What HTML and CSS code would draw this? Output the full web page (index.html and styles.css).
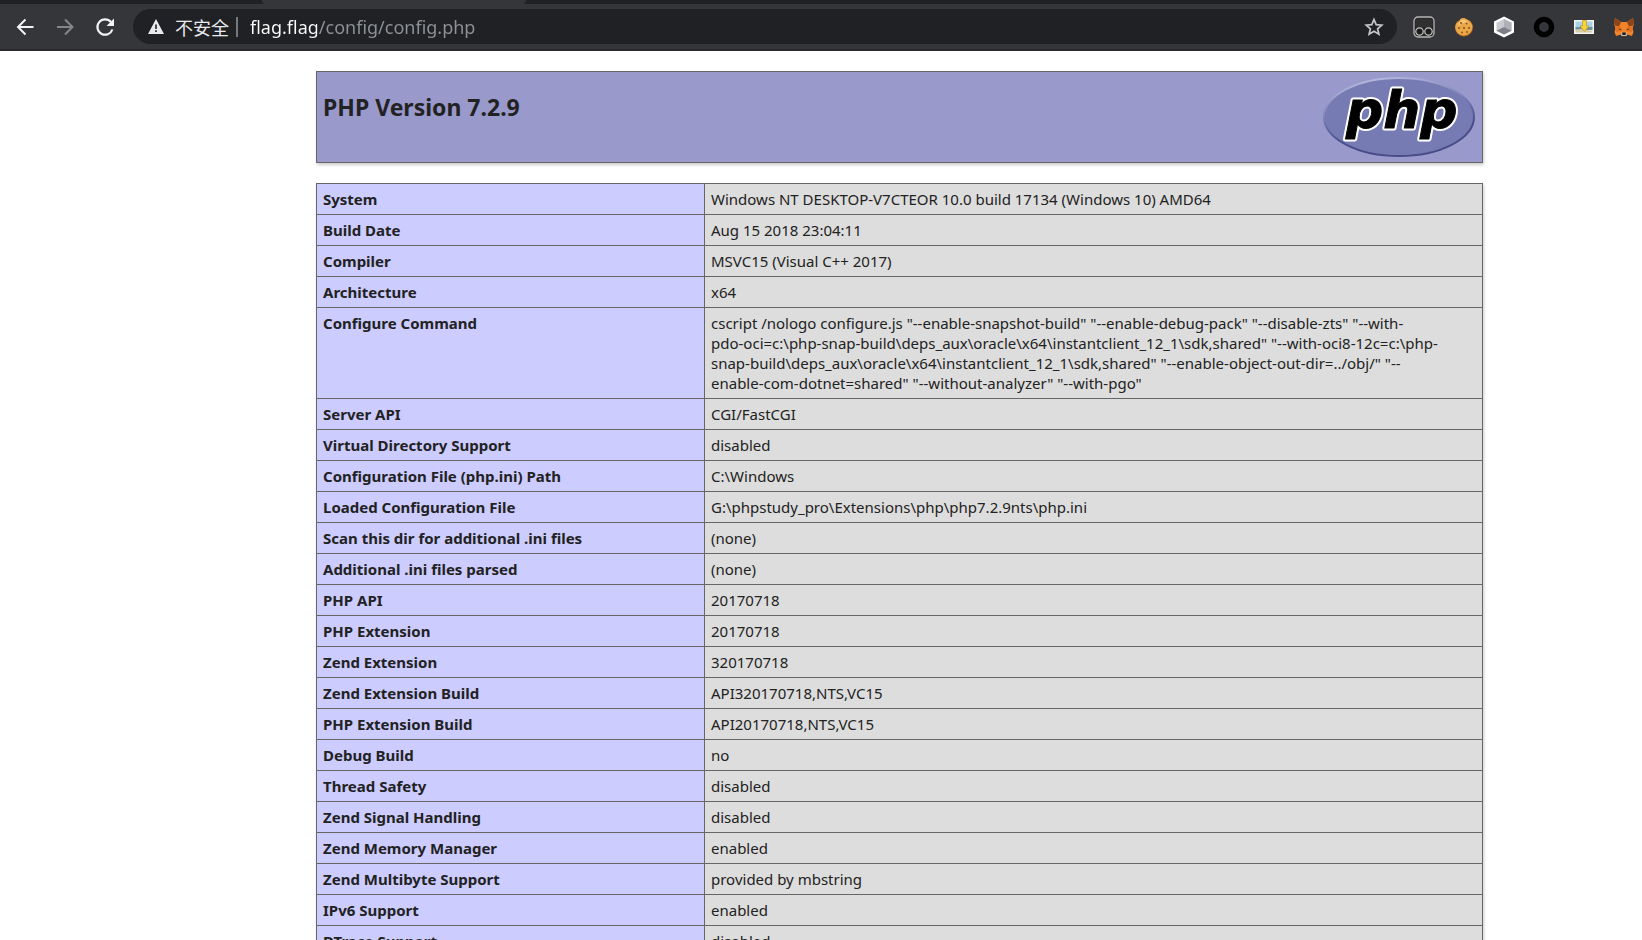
FILE: index.html
```html
<!doctype html>
<html lang="zh-CN">
<head>
  <meta charset="utf-8">
  <meta name="viewport" content="width=device-width, initial-scale=1">
  <title>PHP 7.2.9 - phpinfo()</title>
  <link rel="stylesheet" href="styles.css">
</head>
<body>
  <div class="tabs"><div class="tab"></div></div>
  <header class="toolbar">
    <nav class="nav">
      <button type="button" aria-label="Back">
        <svg width="20" height="20" viewBox="0 0 20 20" fill="none" stroke="#f1f3f4" stroke-width="2"><path d="M18.500 10H3M10.500 2.500L3 10L10.500 17.500"/></svg>
      </button>
      <button type="button" aria-label="Forward" disabled>
        <svg width="20" height="20" viewBox="0 0 20 20" fill="none" stroke="#85868a" stroke-width="2"><path d="M2 10H17M10 2.500L17.500 10L10 17.500"/></svg>
      </button>
      <button type="button" aria-label="Reload">
        <svg width="20" height="20" viewBox="0 0 20 20"><path d="M16 5A7.700 7.700 0 1 0 17.400 12.500" fill="none" stroke="#f1f3f4" stroke-width="2.200"/><path d="M19 1.500V9H11.500Z" fill="#f1f3f4"/></svg>
      </button>
    </nav>
    <form class="omnibox">
      <svg width="16" height="15" viewBox="0 0 16 15"><path d="M8 0L16 15H0Z" fill="#e8eaed"/><path d="M7.200 5.500H8.800V10H7.200ZM7.200 11.300H8.800V13H7.200Z" fill="#202124"/></svg>
      <label class="unsafe" for="url">不安全</label>
      <span class="divider"></span>
      <input class="url" id="url" type="text" value="flag.flag/config/config.php" spellcheck="false">
      <button class="star" type="button" aria-label="Bookmark">
        <svg width="20" height="20" viewBox="0 0 20 20" fill="none" stroke="#c3c5c8" stroke-width="1.700"><path d="M10 2.500L12.200 7.600L17.800 8.100L13.600 11.800L14.900 17.200L10 14.300L5.100 17.200L6.400 11.800L2.200 8.100L7.800 7.600Z"/></svg>
      </button>
    </form>
    <div class="extensions">
      <button type="button" aria-label="Tampermonkey">
        <svg width="22" height="22" viewBox="0 0 22 22"><rect x="1" y="1" width="20" height="20" rx="4" fill="#242424" stroke="#b5b5b5" stroke-width="1.300"/><rect x="2.500" y="2.500" width="17" height="9" rx="2" fill="#303030"/><g fill="#1c1c1c" stroke="#c8c8c8" stroke-width="1.200"><circle cx="6.500" cy="15.500" r="3.700"/><circle cx="15.500" cy="15.500" r="3.700"/></g></svg>
      </button>
      <button type="button" aria-label="Cookies">
        <svg width="20" height="20" viewBox="0 0 20 20"><circle cx="10" cy="10.500" r="9" fill="#b96a1c"/><path d="M6 2.200Q8 .6 11 1.200L13 2.800L16 4.500L18.300 8Q19 14 14 17.300Q8 20 3.500 16Q-.5 11 2.500 6L6 4Z" fill="#eba84a"/><path d="M5 5Q10 0 14.500 6Q9 4 4 9Z" fill="#f6c878"/><g fill="#8a4f1e"><circle cx="7" cy="6" r="1"/><circle cx="12.500" cy="6.500" r=".9"/><circle cx="5" cy="11" r="1"/><circle cx="10" cy="11" r="1.100"/><circle cx="15" cy="11" r="1"/><circle cx="8" cy="15.500" r=".9"/><circle cx="13" cy="15" r=".9"/></g></svg>
      </button>
      <button type="button" aria-label="Cube">
        <svg width="22" height="22" viewBox="0 0 22 22"><path d="M11 .5L21 5.500V16.500L11 21.500L1 16.500V5.500Z" fill="#fff"/><path d="M11 3L18.500 6.800V14.800L11 18.500L3.500 14.800V6.800Z" fill="#c9cbce"/><path d="M11 3L18.500 6.800V14.800L11 11Z" fill="#aeb1b5"/><path d="M11 11L18.500 14.800L11 18.500L3.500 14.800Z" fill="#7d8187"/></svg>
      </button>
      <button type="button" aria-label="Ring">
        <svg width="22" height="22" viewBox="0 0 22 22"><circle cx="11" cy="11" r="7.600" fill="none" stroke="#000" stroke-width="5.400"/></svg>
      </button>
      <button type="button" aria-label="Image downloader">
        <svg width="20" height="16" viewBox="0 0 20 16"><path d="M0 1H20V15H0Z" fill="#f4f4ef"/><path d="M1.500 2.500H18.500V9H1.500Z" fill="#a9cfe9"/><path d="M1.500 8H18.500V11H1.500Z" fill="#6c91a0"/><path d="M1.500 10.500L8 10L18.500 12V13.500H1.500Z" fill="#d8cba7"/><path d="M8.500 1.500H12.500V7H15L10.500 12.500L6 7H8.500Z" fill="#f9d438" stroke="#c19b20" stroke-width=".7"/></svg>
      </button>
      <button type="button" aria-label="MetaMask">
        <svg width="20" height="20" viewBox="0 0 20 20"><path d="M1 1L7 5H13L19 1L20 7L18.500 11L19.500 15L18 19L13 17.500L12 19H8L7 17.500L2 19L.5 15L1.500 11L0 7Z" fill="#f0842a"/><path d="M1 1L7 5L5 9.500L1 8.500L0 6ZM19 1L13 5L15 9.500L19 8.500L20 6Z" fill="#8a4518"/><path d="M1 10L6 9L8 14L2 15ZM19 10L14 9L12 14L18 15Z" fill="#e56f1c"/><path d="M5 11.500L8 12.800L5.500 13ZM15 11.500L12 12.800L14.500 13Z" fill="#26333c"/><path d="M7 15.500H13L12.500 19H7.500Z" fill="#d5bfb2"/><path d="M8 15.500H12L11.500 18H8.500Z" fill="#161616"/></svg>
      </button>
    </div>
  </header>
  <main class="page">
    <div class="box head">
      <h1>PHP Version 7.2.9</h1>
      <svg class="logo" width="152" height="80" viewBox="0 0 152 80">
        <defs>
          <linearGradient id="rim" x1=".35" y1="0" x2=".65" y2="1">
            <stop offset="0" stop-color="#b4b8dd"/>
            <stop offset=".4" stop-color="#777bb3"/>
            <stop offset=".7" stop-color="#484c89"/>
            <stop offset="1" stop-color="#484c89"/>
          </linearGradient>
        </defs>
        <ellipse cx="76" cy="40" rx="75" ry="39" fill="#777bb3" stroke="url(#rim)" stroke-width="2"/>
        <text class="logo-text logo-outline" x="23" y="51" aria-hidden="true">php</text>
        <text class="logo-text" x="23" y="51">php</text>
      </svg>
    </div>
    <table class="box info">
      <tbody>
        <tr><th scope="row">System</th><td>Windows NT DESKTOP-V7CTEOR 10.0 build 17134 (Windows 10) AMD64</td></tr>
        <tr><th scope="row">Build Date</th><td>Aug 15 2018 23:04:11</td></tr>
        <tr><th scope="row">Compiler</th><td>MSVC15 (Visual C++ 2017)</td></tr>
        <tr><th scope="row">Architecture</th><td>x64</td></tr>
        <tr><th scope="row">Configure Command</th><td>cscript /nologo configure.js "--enable-snapshot-build" "--enable-debug-pack" "--disable-zts" "--with-<br>pdo-oci=c:\php-snap-build\deps_aux\oracle\x64\instantclient_12_1\sdk,shared" "--with-oci8-12c=c:\php-<br>snap-build\deps_aux\oracle\x64\instantclient_12_1\sdk,shared" "--enable-object-out-dir=../obj/" "--<br>enable-com-dotnet=shared" "--without-analyzer" "--with-pgo"</td></tr>
        <tr><th scope="row">Server API</th><td>CGI/FastCGI</td></tr>
        <tr><th scope="row">Virtual Directory Support</th><td>disabled</td></tr>
        <tr><th scope="row">Configuration File (php.ini) Path</th><td>C:\Windows</td></tr>
        <tr><th scope="row">Loaded Configuration File</th><td>G:\phpstudy_pro\Extensions\php\php7.2.9nts\php.ini</td></tr>
        <tr><th scope="row">Scan this dir for additional .ini files</th><td>(none)</td></tr>
        <tr><th scope="row">Additional .ini files parsed</th><td>(none)</td></tr>
        <tr><th scope="row">PHP API</th><td>20170718</td></tr>
        <tr><th scope="row">PHP Extension</th><td>20170718</td></tr>
        <tr><th scope="row">Zend Extension</th><td>320170718</td></tr>
        <tr><th scope="row">Zend Extension Build</th><td>API320170718,NTS,VC15</td></tr>
        <tr><th scope="row">PHP Extension Build</th><td>API20170718,NTS,VC15</td></tr>
        <tr><th scope="row">Debug Build</th><td>no</td></tr>
        <tr><th scope="row">Thread Safety</th><td>disabled</td></tr>
        <tr><th scope="row">Zend Signal Handling</th><td>disabled</td></tr>
        <tr><th scope="row">Zend Memory Manager</th><td>enabled</td></tr>
        <tr><th scope="row">Zend Multibyte Support</th><td>provided by mbstring</td></tr>
        <tr><th scope="row">IPv6 Support</th><td>enabled</td></tr>
        <tr><th scope="row">DTrace Support</th><td>disabled</td></tr>
      </tbody>
    </table>
  </main>
</body>
</html>
```

FILE: styles.css
```css
* {
  box-sizing: border-box;
}

body {
  display: flex;
  flex-direction: column;
  height: 100vh;
  margin: 0;
  overflow: hidden;
  background: #fff;
  color: #222;
  font-family: "Noto Sans", "Open Sans", "Noto Sans CJK SC", sans-serif;
  font-size: 15px;
  line-height: 20px;
}

button {
  display: flex;
  align-items: center;
  justify-content: center;
  width: 40px;
  height: 36px;
  padding: 0;
  border: none;
  background: none;
}

/* browser bar */
.tabs {
  flex: none;
  height: 4px;
  padding-left: 262px;
  background: #202124;
}

.tab {
  width: 264px;
  height: 4px;
  border-radius: 0 0 4px 4px;
  background: #35363a;
}

.toolbar {
  display: flex;
  flex: none;
  align-items: center;
  height: 47px;
  padding: 0 0 0 5px;
  border-bottom: 2px solid #28292c;
  background: #35363a;
}

.nav {
  display: flex;
  margin-right: 8px;
}

.omnibox {
  display: flex;
  flex: 1;
  align-items: center;
  height: 35px;
  margin: 0 7px 0 0;
  padding: 0 3px 0 15px;
  border-radius: 18px;
  background: #202124;
  font-size: 18px;
}

.unsafe {
  margin-left: 11px;
  color: #e8eaed;
  font-family: "Noto Sans CJK SC", sans-serif;
  white-space: nowrap;
}

.divider {
  width: 2px;
  height: 20px;
  margin: 0 12px 0 7px;
  background: #77787b;
}

.url {
  flex: 1;
  min-width: 0;
  height: 30px;
  padding: 0;
  border: none;
  outline: none;
  /* host is white, path is grey */
  background: linear-gradient(90deg, #fff 67px, #8f9397 67px);
  -webkit-background-clip: text;
  background-clip: text;
  color: #8f9397;
  -webkit-text-fill-color: transparent;
  font-family: inherit;
  font-size: 18px;
}

.extensions {
  display: flex;
  flex: none;
  margin-right: -2px;
}

/* phpinfo page */
.page {
  flex: 1;
  min-height: 0;
  padding: 20px 159px 0 316px;
  overflow: hidden;
}

.box {
  width: 100%;
  border: 1px solid #666;
  box-shadow: 1px 2px 3px #ccc;
}

.head {
  display: flex;
  justify-content: space-between;
  height: 92px;
  margin-bottom: 20px;
  padding: 5px 7px 5px 6px;
  background: #99c;
}

h1 {
  margin: 14px 0 0;
  font-size: 23px;
  line-height: 32px;
}

.logo-text {
  fill: #000;
  stroke: #000;
  stroke-width: 1px;
  font: italic bold 52px "DejaVu Sans", sans-serif;
}

.logo-outline {
  stroke: #fff;
  stroke-width: 5px;
  stroke-linejoin: round;
}

.info {
  border-collapse: collapse;
  table-layout: fixed;
}

.info th,
.info td {
  padding: 5px 6px;
  border: 1px solid #666;
  text-align: left;
  vertical-align: baseline;
}

.info th {
  width: 388px;
  background: #ccf;
}

.info td {
  background: #ddd;
  overflow-wrap: break-word;
}
```
